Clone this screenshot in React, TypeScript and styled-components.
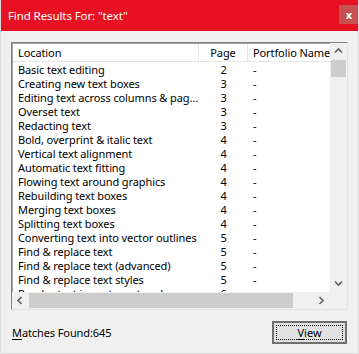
import React from 'react'
import styled, { createGlobalStyle } from 'styled-components'

const GlobalStyle = createGlobalStyle`
  html, body {
    margin: 0;
    padding: 0;
    background: #f0f0f0;
  }
  * {
    box-sizing: border-box;
  }
`

const Window = styled.div`
  width: 359px;
  height: 354px;
  display: flex;
  flex-direction: column;
  background: #f0f0f0;
  border: 1px solid #dcdcdc;
  border-top: none;
  font-family: 'Noto Sans', 'Open Sans', sans-serif;
  font-size: 11px;
  letter-spacing: -0.1px;
  color: #000;
  overflow: hidden;
`

const TitleBar = styled.div`
  height: 31px;
  margin: 0 -1px;
  background: #e81123;
  display: flex;
  align-items: center;
  justify-content: space-between;
  padding-left: 8px;
  color: #fff;
  font-size: 11.5px;
`

const CloseButton = styled.div`
  width: 20px;
  height: 19px;
  margin-top: -3px;
  background: #c85050;
  color: #fff;
  font-size: 11px;
  font-weight: bold;
  display: flex;
  align-items: center;
  justify-content: center;
  line-height: 1;
`

const Body = styled.div`
  flex: 1;
  display: flex;
  flex-direction: column;
  padding: 11px 10px 0 10px;
`

const ListBox = styled.div`
  height: 268px;
  border: 1px solid #828282;
  border-right-color: #e3e3e3;
  border-bottom-color: #e3e3e3;
  display: grid;
  grid-template-columns: 1fr 17px;
  grid-template-rows: 1fr 17px;
  background: #fff;
  box-shadow: inset 1px 1px 0 #a0a0a0;
  padding: 1px 0 0 1px;
`

const Content = styled.div`
  overflow: hidden;
  display: flex;
  flex-direction: column;
`

const HeaderRow = styled.div`
  display: flex;
  height: 18px;
  flex-shrink: 0;
  border-bottom: 1px solid #e5e5e5;
  margin-bottom: 1px;
`

const HeaderCell = styled.div<{ $w: number; $center?: boolean }>`
  width: ${p => p.$w}px;
  flex-shrink: 0;
  padding: 0 5px;
  line-height: 17px;
  border-right: 1px solid #e5e5e5;
  text-align: ${p => (p.$center ? 'center' : 'left')};
  white-space: nowrap;
  overflow: hidden;
`

const Row = styled.div`
  display: flex;
  height: 14px;
  line-height: 14px;
  flex-shrink: 0;
`

const Cell = styled.div<{ $w: number; $center?: boolean }>`
  width: ${p => p.$w}px;
  flex-shrink: 0;
  padding: 0 5px;
  white-space: nowrap;
  overflow: hidden;
  text-align: ${p => (p.$center ? 'center' : 'left')};
`

const VScroll = styled.div`
  background: #f0f0f0;
  display: flex;
  flex-direction: column;
  margin-top: -1px;
`

const HScroll = styled.div`
  background: #f0f0f0;
  display: flex;
  margin-left: -1px;
`

const ArrowBox = styled.div`
  width: 17px;
  height: 17px;
  flex-shrink: 0;
  display: flex;
  align-items: center;
  justify-content: center;
`

const VThumb = styled.div`
  height: 17px;
  margin: 0 1px;
  background: #cdcdcd;
`

const HThumb = styled.div`
  width: 264px;
  margin: 1px 0;
  background: #cdcdcd;
`

const Spacer = styled.div`
  flex: 1;
`

const Corner = styled.div`
  background: #f0f0f0;
`

const Footer = styled.div`
  display: flex;
  align-items: center;
  justify-content: space-between;
  padding: 11px 0 0 1px;
`

const Underlined = styled.span`
  text-decoration: underline;
  text-underline-offset: 2px;
`

const Button = styled.button`
  width: 75px;
  height: 23px;
  margin-right: 1px;
  background: #e1e1e1;
  border: 2px solid #707070;
  font-family: inherit;
  font-size: 11px;
  color: #000;
  padding: 2px;
  display: flex;
`

const FocusRect = styled.span`
  flex: 1;
  border: 1px dotted #000;
  display: flex;
  align-items: center;
  justify-content: center;
  line-height: 1;
`

const Chevron = ({ dir }: { dir: 'up' | 'down' | 'left' | 'right' }) => {
  const paths: Record<string, string> = {
    up: 'M1 5.5 L4.5 2 L8 5.5',
    down: 'M1 2.5 L4.5 6 L8 2.5',
    left: 'M5.5 1 L2 4.5 L5.5 8',
    right: 'M2.5 1 L6 4.5 L2.5 8',
  }
  return (
    <svg width="9" height="9" viewBox="0 0 9 9">
      <path d={paths[dir]} fill="none" stroke="#606060" strokeWidth="1.6" />
    </svg>
  )
}

const rows: [string, string][] = [
  ['Basic text editing', '2'],
  ['Creating new text boxes', '3'],
  ['Editing text across columns & pag...', '3'],
  ['Overset text', '3'],
  ['Redacting text', '3'],
  ['Bold, overprint & italic text', '4'],
  ['Vertical text alignment', '4'],
  ['Automatic text fitting', '4'],
  ['Flowing text around graphics', '4'],
  ['Rebuilding text boxes', '4'],
  ['Merging text boxes', '4'],
  ['Splitting text boxes', '4'],
  ['Converting text into vector outlines', '5'],
  ['Find & replace text', '5'],
  ['Find & replace text (advanced)', '5'],
  ['Find & replace text styles', '5'],
  ['Render text in vector artwork', '6'],
]

export default function App() {
  return (
    <>
      <GlobalStyle />
      <Window>
        <TitleBar>
          <span>Find Results For: "text"</span>
          <CloseButton>x</CloseButton>
        </TitleBar>
        <Body>
          <ListBox>
            <Content>
              <HeaderRow>
                <HeaderCell $w={186}>Location</HeaderCell>
                <HeaderCell $w={49} $center>Page</HeaderCell>
                <HeaderCell $w={100}>Portfolio Name</HeaderCell>
              </HeaderRow>
              {rows.map(([loc, page]) => (
                <Row key={loc}>
                  <Cell $w={186}>{loc}</Cell>
                  <Cell $w={49} $center>{page}</Cell>
                  <Cell $w={82}>-</Cell>
                </Row>
              ))}
            </Content>
            <VScroll>
              <ArrowBox><Chevron dir="up" /></ArrowBox>
              <VThumb />
              <Spacer />
              <ArrowBox><Chevron dir="down" /></ArrowBox>
            </VScroll>
            <HScroll>
              <ArrowBox><Chevron dir="left" /></ArrowBox>
              <HThumb />
              <Spacer />
              <ArrowBox><Chevron dir="right" /></ArrowBox>
            </HScroll>
            <Corner />
          </ListBox>
          <Footer>
            <span><Underlined>M</Underlined>atches Found:645</span>
            <Button>
              <FocusRect><Underlined>V</Underlined>iew</FocusRect>
            </Button>
          </Footer>
        </Body>
      </Window>
    </>
  )
}
